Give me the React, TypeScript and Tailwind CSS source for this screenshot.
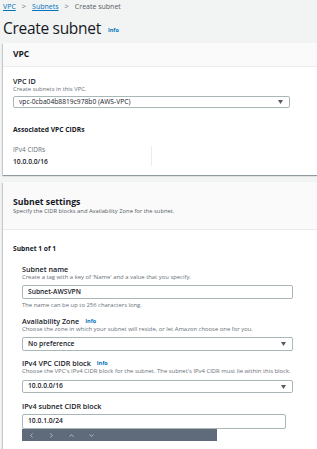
import { ChevronLeft, ChevronRight, ChevronUp, ChevronDown } from 'lucide-react'

function Caret() {
  return (
    <svg width="5" height="4" viewBox="0 0 5 4" className="shrink-0">
      <path d="M0 0h5L2.5 4z" fill="#545b64" />
    </svg>
  )
}

function Info() {
  return <span className="text-[5.5px] font-bold text-[#0073bb] ml-[6px]">Info</span>
}

function Label({ children, info }: { children: React.ReactNode; info?: boolean }) {
  return (
    <div className="flex items-center h-[9px] text-[7.2px] leading-[9px] font-semibold text-[#16191f]">
      {children}
      {info && <Info />}
    </div>
  )
}

function Desc({ children }: { children: React.ReactNode }) {
  return <p className="h-[7px] text-[5.9px] leading-[7px] text-[#687078] whitespace-nowrap">{children}</p>
}

function Select({ value, className }: { value: string; className: string }) {
  return (
    <div className={`flex items-center justify-between pl-[5px] pr-[6px] border border-[#aab7b8] rounded-[2px] bg-white text-[6.7px] text-[#16191f] ${className}`}>
      <span>{value}</span>
      <Caret />
    </div>
  )
}

export default function App() {
  const card = 'ml-[3px] w-[340px] bg-white shadow-[0_1px_1px_0_rgba(0,28,36,0.3),-1px_1px_1px_0_rgba(0,28,36,0.15)]'
  return (
    <div className="w-[317px] h-[449px] overflow-hidden bg-[#f2f3f3] font-['Open_Sans',sans-serif] text-[#16191f]">
      <nav className="flex items-center h-[14px] pl-[3px] gap-[6px] text-[7px]">
        <span className="text-[#0073bb] underline">VPC</span>
        <span className="text-[#687078] text-[7.5px]">&gt;</span>
        <span className="text-[#0073bb] underline">Subnets</span>
        <span className="text-[#687078] text-[7.5px]">&gt;</span>
        <span className="text-[#545b64]">Create subnet</span>
      </nav>
      <div className="flex items-center h-[29px] pl-[3px]">
        <h1 className="text-[15.5px] leading-[29px] font-normal tracking-[-0.3px]">Create subnet</h1>
        <span className="text-[5.5px] font-bold text-[#0073bb] ml-[7px] mt-[4px]">Info</span>
      </div>

      <section className={card}>
        <div className="h-[24px] flex items-center px-[10px] bg-[#fafafa] border-b border-[#eaeded]">
          <h2 className="text-[8.5px] font-bold">VPC</h2>
        </div>
        <div className="px-[10px] pt-[10px] pb-[9px]">
          <Label>VPC ID</Label>
          <Desc>Create subnets in this VPC.</Desc>
          <Select value="vpc-0cba04b8819c978b0 (AWS-VPC)" className="mt-[3px] h-[12px] w-[277px]" />
          <div className="mt-[18px] h-[8px] text-[6.7px] leading-[8px] font-bold">Associated VPC CIDRs</div>
          <div className="mt-[12px] w-[139px] border-r border-[#eaeded]">
            <div className="h-[8px] text-[6.5px] leading-[8px] text-[#687078]">IPv4 CIDRs</div>
            <div className="mt-[4px] h-[8px] text-[6.7px] leading-[8px] font-semibold">10.0.0.0/16</div>
          </div>
        </div>
      </section>

      <section className={`${card} mt-[7px] h-[300px]`}>
        <div className="h-[48px] px-[10px] pt-[14px] bg-[#fafafa] border-b border-[#eaeded]">
          <h2 className="h-[12px] text-[8.7px] leading-[12px] font-bold">Subnet settings</h2>
          <p className="h-[7px] text-[5.8px] leading-[7px] text-[#545b64]">Specify the CIDR blocks and Availability Zone for the subnet.</p>
        </div>
        <div className="px-[10px] pt-[15px]">
          <div className="h-[8px] text-[6.7px] leading-[8px] font-bold">Subnet 1 of 1</div>
          <div className="pl-[9px]">
            <div className="mt-[12px]"><Label>Subnet name</Label></div>
            <Desc>Create a tag with a key of 'Name' and a value that you specify.</Desc>
            <div className="mt-[4px] h-[14px] w-[271px] flex items-center pl-[5px] border border-[#aab7b8] rounded-[2px] text-[6.7px] font-semibold">Subnet-AWSVPN</div>
            <div className="mt-[3px]"><Desc>The name can be up to 256 characters long.</Desc></div>

            <div className="mt-[8px]"><Label info>Availability Zone</Label></div>
            <Desc>Choose the zone in which your subnet will reside, or let Amazon choose one for you.</Desc>
            <Select value="No preference" className="mt-[4px] h-[14px] w-[271px] font-semibold" />

            <div className="mt-[8px]"><Label info>IPv4 VPC CIDR block</Label></div>
            <Desc>Choose the VPC's IPv4 CIDR block for the subnet. The subnet's IPv4 CIDR must lie within this block.</Desc>
            <Select value="10.0.0.0/16" className="mt-[5px] h-[13px] w-[271px] font-semibold" />

            <div className="mt-[9px]"><Label>IPv4 subnet CIDR block</Label></div>
            <div className="mt-[3px] h-[15px] w-[264px] flex items-center pl-[5px] border border-[#aab7b8] rounded-[2px] text-[6.7px] font-semibold">10.0.1.0/24</div>
            <div className="h-[12px] w-[195px] bg-[#5f6b7a] flex items-center pl-[6px] gap-[13px] text-[#eaeded]">
              <ChevronLeft size={7} strokeWidth={2} />
              <ChevronRight size={7} strokeWidth={2} />
              <ChevronUp size={7} strokeWidth={2} />
              <ChevronDown size={7} strokeWidth={2} />
            </div>
          </div>
        </div>
      </section>
    </div>
  )
}
